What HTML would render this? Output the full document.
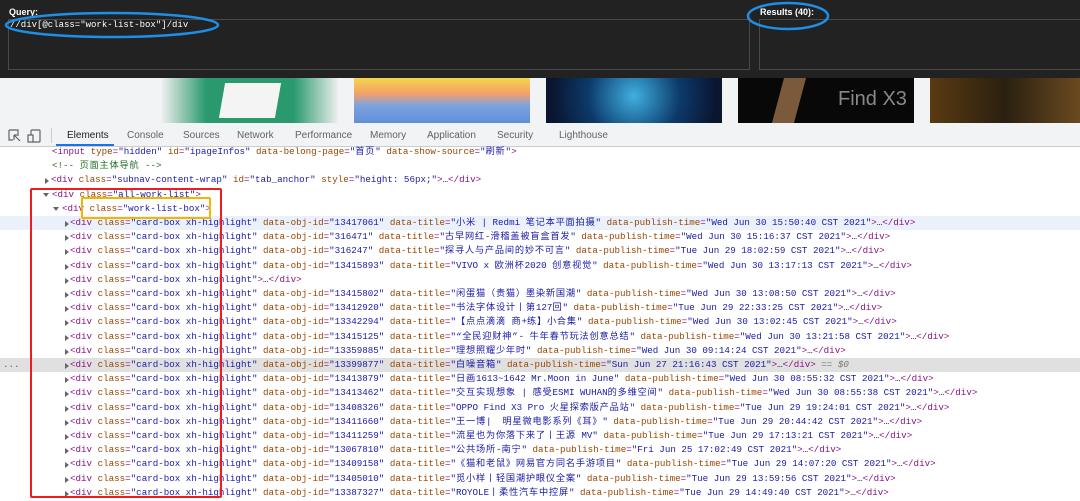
<!DOCTYPE html>
<html><head><meta charset="utf-8"><style>
*{margin:0;padding:0;box-sizing:border-box}
body{width:1080px;height:501px;overflow:hidden;background:#fff;position:relative;font-family:"Liberation Sans",sans-serif}
.dark{position:absolute;left:0;top:0;width:1080px;height:78px;background:#222}
.lbl{position:absolute;color:#fff;font-weight:bold;font-size:9px}
.box{position:absolute;border:1px solid #4a4a4a}
.q{position:absolute;left:10px;top:20px;color:#fff;font:9px "Liberation Mono",monospace}
.strip{position:absolute;left:0;top:78px;width:1080px;height:46px;background:#f1f3f4}
.img{position:absolute;top:78px;height:45px;overflow:hidden}
.tabs{position:absolute;left:0;top:124px;width:1080px;height:23px;background:#f1f3f4;border-bottom:1px solid #ccc}
.tab{position:absolute;top:6px;font-size:10px;color:#5f6368}
.row{position:absolute;left:0;width:1080px;height:14.2px;font:9.2px "Liberation Mono","Noto Sans CJK SC",monospace;white-space:pre;line-height:14.2px;color:#222}
.row span.t{color:#881280}.row span.a{color:#994500}.row span.v{color:#1a1aa6}.c{color:#236e25}
.k{letter-spacing:0.8px}
.ar{position:absolute;top:5px;width:0;height:0;border-left:4px solid #666;border-top:3px solid transparent;border-bottom:3px solid transparent}
.ard{position:absolute;top:5px;width:0;height:0;border-top:4px solid #666;border-left:3px solid transparent;border-right:3px solid transparent}
</style></head><body>
<div class="dark"></div>
<div class="lbl" style="left:9px;top:7px">Query:</div>
<div class="box" style="left:8px;top:19px;width:742px;height:51px"></div>
<div class="q">//div[@class="work-list-box"]/div</div>
<div class="lbl" style="left:760px;top:7px">Results (40):</div>
<div class="box" style="left:759px;top:19px;width:330px;height:51px"></div>
<svg style="position:absolute;left:0;top:0" width="1080" height="501">
<ellipse cx="112" cy="25" rx="106" ry="12" fill="none" stroke="#1e8fe6" stroke-width="2.5"/>
<ellipse cx="788" cy="16" rx="40" ry="13" fill="none" stroke="#1e8fe6" stroke-width="2.5"/>
</svg>
<div class="strip"></div>
<div class="img" style="left:162px;width:176px;background:linear-gradient(90deg,#eee 0%,#2a9a6e 25%,#2a9a6e 75%,#eee 100%)"><div style="position:absolute;left:60px;top:5px;width:56px;height:35px;background:#f4f4f4;transform:skewX(-10deg)"></div></div>
<div class="img" style="left:354px;width:176px;background:linear-gradient(180deg,#f5d64a 0%,#f4a06a 35%,#7ea3dc 60%,#5f8fdc 100%)"></div>
<div class="img" style="left:546px;width:176px;background:radial-gradient(circle at 50% 40%,#3fb0e0,#0c3a6a 50%,#0a1530 90%)"></div>
<div class="img" style="left:738px;width:176px;background:#080808;color:#888;font-size:20px"><span style="position:absolute;left:100px;top:10px">Find X3</span><div style="position:absolute;left:40px;top:0;width:22px;height:45px;background:#7a5a3a;transform:skewX(-15deg)"></div></div>
<div class="img" style="left:930px;width:150px;background:linear-gradient(90deg,#5a3a10,#2a2010 50%,#6a4a20)"></div>
<div class="tabs">
<svg style="position:absolute;left:8px;top:5px" width="36" height="14"><path d="M1 1h9v4M1 1v10h4M6 6l6 6M6 6v5M6 6h5" fill="none" stroke="#5f6368" stroke-width="1.2"/><rect x="23" y="1" width="9" height="12" rx="1" fill="none" stroke="#5f6368" stroke-width="1.2"/><rect x="20" y="6" width="5" height="7" fill="#f1f3f4" stroke="#5f6368" stroke-width="1.2"/></svg>
<div style="position:absolute;left:51px;top:4px;width:1px;height:15px;background:#ccc"></div>
<div class="tab" style="left:67px;color:#202124">Elements</div>
<div style="position:absolute;left:56px;top:20px;width:58px;height:2px;background:#1a73e8"></div>
<div class="tab" style="left:127px">Console</div>
<div class="tab" style="left:183px">Sources</div>
<div class="tab" style="left:237px">Network</div>
<div class="tab" style="left:295px">Performance</div>
<div class="tab" style="left:370px">Memory</div>
<div class="tab" style="left:427px">Application</div>
<div class="tab" style="left:497px">Security</div>
<div class="tab" style="left:559px">Lighthouse</div>
</div>

<div class="row" style="top:145px"><span style="position:absolute;left:52px"><span class="t">&lt;input</span> <span class="a">type</span><span class="t">=</span><span class="v">"hidden"</span> <span class="a">id</span><span class="t">=</span><span class="v">"ipageInfos"</span> <span class="a">data-belong-page</span><span class="t">=</span><span class="v">"<span class="k">首页</span>"</span> <span class="a">data-show-source</span><span class="t">=</span><span class="v">"<span class="k">刷新</span>"</span><span class="t">&gt;</span></span></div>
<div class="row" style="top:159.2px"><span class="c" style="position:absolute;left:52px">&lt;!-- <span class="k">页面主体导航</span> --&gt;</span></div>
<div class="row" style="top:173.4px"><i class="ar" style="left:45px"></i><span style="position:absolute;left:51px"><span class="t">&lt;div</span> <span class="a">class</span><span class="t">=</span><span class="v">"subnav-content-wrap"</span> <span class="a">id</span><span class="t">=</span><span class="v">"tab_anchor"</span> <span class="a">style</span><span class="t">=</span><span class="v">"height: 56px;"</span><span class="t">&gt;</span>…<span class="t">&lt;/div&gt;</span></span></div>
<div class="row" style="top:187.6px"><i class="ard" style="left:43px"></i><span style="position:absolute;left:52px"><span class="t">&lt;div</span> <span class="a">class</span><span class="t">=</span><span class="v">"all-work-list"</span><span class="t">&gt;</span></span></div>
<div class="row" style="top:201.8px"><i class="ard" style="left:53px"></i><span style="position:absolute;left:62px"><span class="t">&lt;div</span> <span class="a">class</span><span class="t">=</span><span class="v">"work-list-box"</span><span class="t">&gt;</span></span></div>
<div id="cards"></div>
<script>
var d=[["13417061","小米 | Redmi 笔记本平面拍摄","Wed Jun 30 15:50:40"],["316471","古早网红-滑稽盖被盲盒首发","Wed Jun 30 15:16:37"],["316247","探寻人与产品间的妙不可言","Tue Jun 29 18:02:59"],["13415893","VIVO x 欧洲杯2020 创意视觉","Wed Jun 30 13:17:13"],null,["13415802","闲蛋猫（贵猫）墨染新国潮","Wed Jun 30 13:08:50"],["13412920","书法字体设计丨第127回","Tue Jun 29 22:33:25"],["13342294","【点点滴滴 商+练】小合集","Wed Jun 30 13:02:45"],["13415125","“全民迎财神”- 牛年春节玩法创意总结","Wed Jun 30 13:21:58"],["13359885","理想照耀少年时","Wed Jun 30 09:14:24"],["13399877","白噪音箱","Sun Jun 27 21:16:43"],["13413879","日画1613~1642 Mr.Moon in June","Wed Jun 30 08:55:32"],["13413462","交互实现想象 | 感受ESMI WUHAN的多维空间","Wed Jun 30 08:55:38"],["13408326","OPPO Find X3 Pro 火星探索版产品站","Tue Jun 29 19:24:01"],["13411660","王一博|  明星微电影系列《耳》","Tue Jun 29 20:44:42"],["13411259","流星也为你落下来了丨王源 MV","Tue Jun 29 17:13:21"],["13067810","公共场所-南宁","Fri Jun 25 17:02:49"],["13409158","《猫和老鼠》网易官方同名手游项目","Tue Jun 29 14:07:20"],["13405010","觅小样丨轻国潮护眼仪全案","Tue Jun 29 13:59:56"],["13387327","ROYOLE丨柔性汽车中控屏","Tue Jun 29 14:49:40"]];
var h="";
function kk(s){return s.replace(/([^\x00-\xff]+)/g,'<span class="k">$1</span>');}
for(var i=0;i<d.length;i++){var ty=216+i*14.2;var bg=i==0?"background:#eaf1fb;":(i==10?"background:#e0e0e0;":"");
var s='<span class="t">&lt;div</span> <span class="a">class</span><span class="t">=</span><span class="v">"card-box xh-highlight"</span>';
if(d[i]){s+=' <span class="a">data-obj-id</span><span class="t">=</span><span class="v">"'+d[i][0]+'"</span> <span class="a">data-title</span><span class="t">=</span><span class="v">"'+kk(d[i][1])+'"</span> <span class="a">data-publish-time</span><span class="t">=</span><span class="v">"'+d[i][2]+' CST 2021"</span><span class="t">&gt;</span>…<span class="t">&lt;/div&gt;</span>';}
else s+='<span class="t">&gt;</span>…<span class="t">&lt;/div&gt;</span>';
if(i==10)s+=' <span style="color:#777">== <i>$0</i></span>';
h+='<div class="row" style="top:'+ty+'px;'+bg+'">'+(i==10?'<span style="position:absolute;left:3px;color:#666">...</span>':'')+'<i class="ar" style="left:65px"></i><span style="position:absolute;left:70px">'+s+'</span></div>';}
document.getElementById("cards").innerHTML=h;
</script>
<div style="position:absolute;left:30px;top:188px;width:192px;height:310px;border:2.5px solid #ee1c1c;border-radius:2px"></div>
<div style="position:absolute;left:81px;top:197px;width:130px;height:22px;border:2.5px solid #f5b400;border-radius:2px"></div>
</body></html>
